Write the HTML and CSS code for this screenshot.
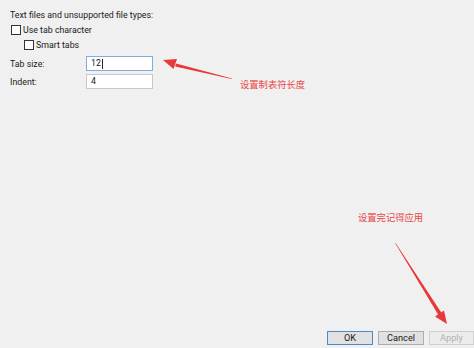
FILE: index.html
```html
<!DOCTYPE html>
<html>
<head>
<meta charset="utf-8">
<link rel="stylesheet" href="styles.css">
</head>
<body>
<div class="page">
  <div class="content">
    <div class="heading">Text files and unsupported file types:</div>
    <label class="check"><span class="box"></span>Use tab character</label>
    <label class="check sub"><span class="box"></span>Smart tabs</label>
    <div class="field">
      <span class="flabel">Tab size:</span>
      <span class="input focused">12<span class="caret"></span></span>
    </div>
    <div class="field">
      <span class="flabel">Indent:</span>
      <span class="input">4</span>
    </div>
  </div>
  <div class="buttons">
    <span class="btn default">OK</span>
    <span class="btn">Cancel</span>
    <span class="btn disabled">Apply</span>
  </div>
</div>
<div class="note note1">设置制表符长度</div>
<div class="note note2">设置完记得应用</div>
<svg class="arrows" width="474" height="348" viewBox="0 0 474 348">
  <polygon points="232,78.6 176,63.4 175.2,66.4 231.6,78.9" fill="#e8383a"/>
  <polygon points="163,60 177,59 173.5,69" fill="#e8383a"/>
  <polygon points="395.6,243 441.6,313 438.4,315 395.2,243.3" fill="#e8383a"/>
  <polygon points="447,324 435,316.5 444,310.5" fill="#e8383a"/>
</svg>
</body>
</html>
```
FILE: styles.css
```css
html, body {
  margin: 0;
  padding: 0;
}
body {
  width: 474px;
  height: 348px;
  background: #f0f0f0;
  font-family: Roboto, "Noto Sans", sans-serif;
  font-size: 8.8px;
  color: #1a1a1a;
  position: relative;
  overflow: hidden;
}
.page {
  height: 348px;
  display: flex;
  flex-direction: column;
  justify-content: space-between;
}
.content {
  padding: 8px 0 0 10px;
  display: flex;
  flex-direction: column;
}
.heading {
  height: 14px;
  line-height: 14px;
}
.check {
  display: flex;
  align-items: center;
  gap: 2px;
  height: 14px;
  margin-top: 1px;
}
.check.sub {
  margin-left: 13px;
}
.box {
  width: 8px;
  height: 8px;
  border: 1px solid #333;
  background: #fff;
  margin-left: 1px;
}
.field {
  display: flex;
  align-items: center;
  height: 15px;
  margin-top: 3px;
}
.check + .field {
  margin-top: 4px;
}
.flabel {
  width: 76px;
}
.input {
  box-sizing: border-box;
  width: 67px;
  height: 15px;
  line-height: 13px;
  border: 1px solid #c7c7c7;
  background: #fff;
  padding-left: 4px;
  display: flex;
  align-items: center;
}
.input.focused {
  border-color: #7ab0e0;
}
.caret {
  width: 1px;
  height: 10px;
  background: #222;
  margin-left: 1px;
}
.buttons {
  display: flex;
  justify-content: flex-end;
  gap: 5px;
  padding-bottom: 3px;
}
.btn {
  box-sizing: border-box;
  width: 46px;
  height: 14px;
  line-height: 12px;
  text-align: center;
  border: 1px solid #adadad;
  background: #e1e1e1;
  font-size: 9.2px;
}
.btn.default {
  border: 1px solid #4a8ac8;
}
.btn.disabled {
  color: #b0b0b0;
  border-color: #d0d0d0;
  background: #ececec;
  width: 45px;
}
.note {
  position: absolute;
  color: #e84848;
  font-family: "Noto Sans CJK SC", sans-serif;
  font-size: 9.3px;
  line-height: 12px;
}
.note1 {
  left: 240px;
  top: 78px;
}
.note2 {
  left: 358px;
  top: 211px;
}
.arrows {
  position: absolute;
  left: 0;
  top: 0;
}
```
